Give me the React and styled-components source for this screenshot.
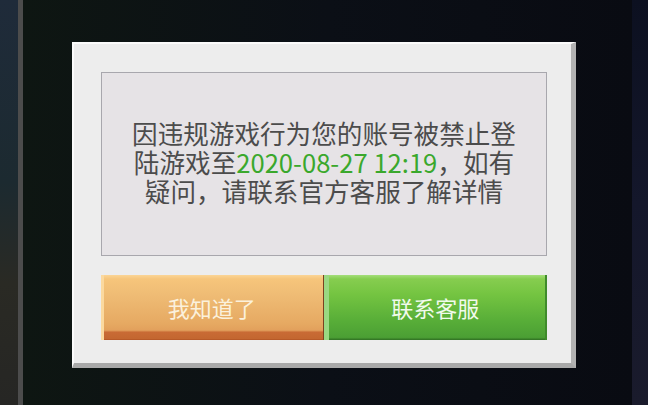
import React from 'react';
import styled, { createGlobalStyle } from 'styled-components';

const GlobalStyle = createGlobalStyle`
  html, body {
    margin: 0;
    padding: 0;
    background: #0b0e14;
  }
  body {
    font-family: 'Noto Sans CJK SC', 'Noto Sans', sans-serif;
  }
`;

const Screen = styled.div`
  width: 648px;
  height: 405px;
  overflow: hidden;
  display: flex;
`;

const LeftStrip = styled.div`
  width: 18px;
  flex-shrink: 0;
  background: linear-gradient(180deg, #1f2b3a 0%, #1c2a30 45%, #2a2a24 70%, #262624 100%);
`;

const Divider = styled.div`
  width: 5px;
  flex-shrink: 0;
  background: #4c4c4c;
`;

const Stage = styled.div`
  flex: 1;
  padding: 42px 0 0 49px;
  background: linear-gradient(90deg, #0e1612 0%, #0b0f16 50%, #090b12 100%);
`;

const RightStrip = styled.div`
  width: 16px;
  flex-shrink: 0;
  background: linear-gradient(180deg, #0c1020 0%, #14172b 50%, #1a1b2c 100%);
`;

const Dialog = styled.div`
  box-sizing: border-box;
  width: 504px;
  height: 326px;
  background: #ededed;
  border-top: 2px solid #fbfbfb;
  border-left: 2px solid #fbfbfb;
  border-right: 5px solid #b2b2b2;
  border-bottom: 5px solid #a9a9a9;
  padding: 28px 24px 0 27px;
  display: flex;
  flex-direction: column;
`;

const Panel = styled.div`
  height: 184px;
  box-sizing: border-box;
  border: 1px solid #a8a7ad;
  background: #e6e3e6;
  display: flex;
  align-items: center;
  justify-content: center;
  padding-bottom: 6px;
`;

const Message = styled.p`
  margin: 0;
  font-size: 25.6px;
  line-height: 29px;
  color: #4c4c4c;
  text-align: center;
  white-space: nowrap;
`;

const Time = styled.span`
  color: #3aa82c;
`;

const Actions = styled.div`
  margin-top: 19px;
  display: flex;
  height: 65px;
`;

const Button = styled.button`
  flex: ${p => p.$grow};
  border: none;
  padding: 0 0 2px;
  margin: 0;
  font-family: inherit;
  font-size: 22px;
  cursor: pointer;
  color: ${p => p.$text};
  background: ${p => p.$bg};
  box-shadow: ${p => p.$shadow};
  border-right: ${p => p.$edge};
`;

const orange = {
  bg: 'linear-gradient(180deg, #fbd596 0px, #f6c57b 4px, #efbc75 30%, #e6a962 75%, #e2a05c 85%, #c96b35 88%, #c2662f 100%)',
  shadow: 'inset 3px 0 0 #fbd99f, inset 0 -1px 0 #b75a28',
  text: '#fbf1dc',
  edge: '1px solid #7a4120',
};

const green = {
  bg: 'linear-gradient(180deg, #a4de7a 0px, #86cd4f 4px, #74c441 30%, #58ae38 70%, #4b9f34 96%, #2f6f22 100%)',
  shadow: 'inset 5px 0 0 #9ad882, inset -2px 0 0 #3f8b2b',
  text: '#f1faec',
  edge: 'none',
};

export default function App() {
  return (
    <>
      <GlobalStyle />
      <Screen>
        <LeftStrip />
        <Divider />
        <Stage>
          <Dialog>
            <Panel>
              <Message>
                因违规游戏行为您的账号被禁止登
                <br />
                陆游戏至<Time>2020-08-27 12:19</Time>，如有
                <br />
                疑问，请联系官方客服了解详情
              </Message>
            </Panel>
            <Actions>
              <Button $grow="222" $bg={orange.bg} $shadow={orange.shadow} $text={orange.text} $edge={orange.edge}>
                我知道了
              </Button>
              <Button $grow="224" $bg={green.bg} $shadow={green.shadow} $text={green.text} $edge={green.edge}>
                联系客服
              </Button>
            </Actions>
          </Dialog>
        </Stage>
        <RightStrip />
      </Screen>
    </>
  );
}
